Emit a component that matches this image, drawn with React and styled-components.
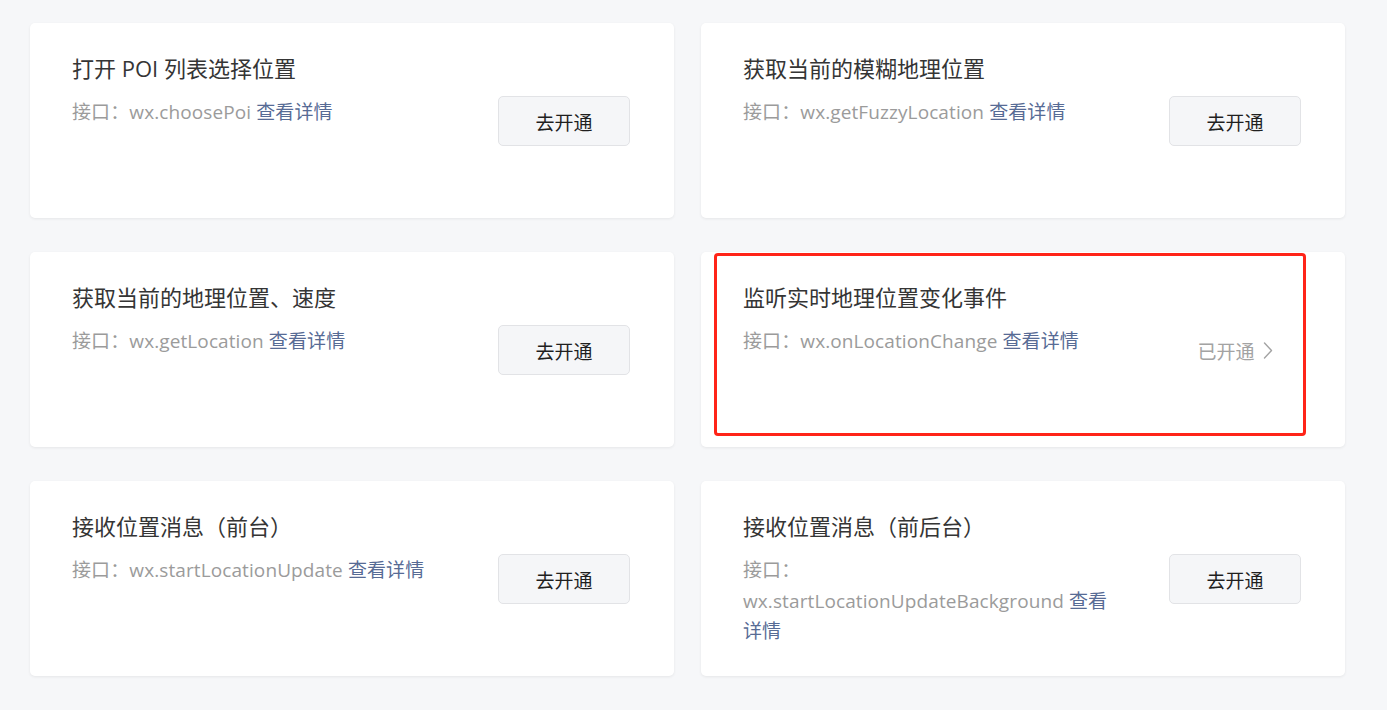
import React from "react";
import styled, { createGlobalStyle } from "styled-components";

const Global = createGlobalStyle`
  html, body {
    margin: 0;
    padding: 0;
    background: #f6f7f9;
  }
  body {
    font-family: "Open Sans", "Noto Sans CJK SC", sans-serif;
    -webkit-font-smoothing: antialiased;
  }
`;

const Page = styled.div`
  padding: 23px 30px 35px 30px;
  background: #f6f7f9;
  min-height: 710px;
  box-sizing: border-box;
`;

const Grid = styled.div`
  display: grid;
  grid-template-columns: 644px 644px;
  column-gap: 27px;
  row-gap: 34px;
`;

const Card = styled.div`
  position: relative;
  height: 195px;
  box-sizing: border-box;
  padding: 30px 44px 0 42px;
  background: #ffffff;
  border-radius: 5px;
  box-shadow: 0 1px 3px rgba(0, 0, 0, 0.07);
`;

const Title = styled.div`
  font-size: 22px;
  line-height: 30px;
  color: #353535;
  margin-bottom: 14px;
`;

const Row = styled.div`
  display: flex;
  align-items: flex-start;
  justify-content: space-between;
`;

const Desc = styled.div`
  width: 368px;
  font-size: 19px;
  line-height: 30.5px;
  color: #9b9b9b;
  letter-spacing: 0.1px;
`;

const Link = styled.a`
  color: #576b95;
  text-decoration: none;
`;

const Button = styled.button`
  width: 132px;
  height: 50px;
  margin-top: -1px;
  box-sizing: border-box;
  border: 1px solid #e2e3e6;
  border-radius: 5px;
  background: #f5f6f8;
  color: #1f1f1f;
  font-family: "Noto Sans CJK SC", sans-serif;
  font-size: 19px;
  cursor: pointer;
  padding: 0;
`;

const Opened = styled.div`
  width: 132px;
  height: 50px;
  margin-top: -1px;
  display: flex;
  align-items: center;
  justify-content: center;
  gap: 8px;
  color: #a3a3a3;
  font-family: "Noto Sans CJK SC", sans-serif;
  font-size: 19px;
`;

const Highlight = styled.div`
  position: absolute;
  left: 13px;
  top: 1px;
  width: 592px;
  height: 183px;
  box-sizing: border-box;
  border: 3px solid #ff2418;
  border-radius: 4px;
  pointer-events: none;
`;

const Chevron = () => (
  <svg width="10" height="17" viewBox="0 0 10 17" fill="none">
    <polyline
      points="1.5,1 8.5,8.5 1.5,16"
      stroke="#a3a3a3"
      strokeWidth="1.4"
      strokeLinecap="round"
      strokeLinejoin="round"
    />
  </svg>
);

const items = [
  { title: "打开 POI 列表选择位置", api: "wx.choosePoi" },
  { title: "获取当前的模糊地理位置", api: "wx.getFuzzyLocation" },
  { title: "获取当前的地理位置、速度", api: "wx.getLocation" },
  { title: "监听实时地理位置变化事件", api: "wx.onLocationChange", opened: true, highlight: true },
  { title: "接收位置消息（前台）", api: "wx.startLocationUpdate" },
  { title: "接收位置消息（前后台）", api: "wx.startLocationUpdateBackground" },
];

function ApiCard({ title, api, opened, highlight }) {
  return (
    <Card>
      <Title>{title}</Title>
      <Row>
        <Desc>
          接口：{api} <Link href="#">查看详情</Link>
        </Desc>
        {opened ? (
          <Opened>
            已开通
            <Chevron />
          </Opened>
        ) : (
          <Button>去开通</Button>
        )}
      </Row>
      {highlight && <Highlight />}
    </Card>
  );
}

export default function App() {
  return (
    <Page>
      <Global />
      <Grid>
        {items.map((it) => (
          <ApiCard key={it.api} {...it} />
        ))}
      </Grid>
    </Page>
  );
}
